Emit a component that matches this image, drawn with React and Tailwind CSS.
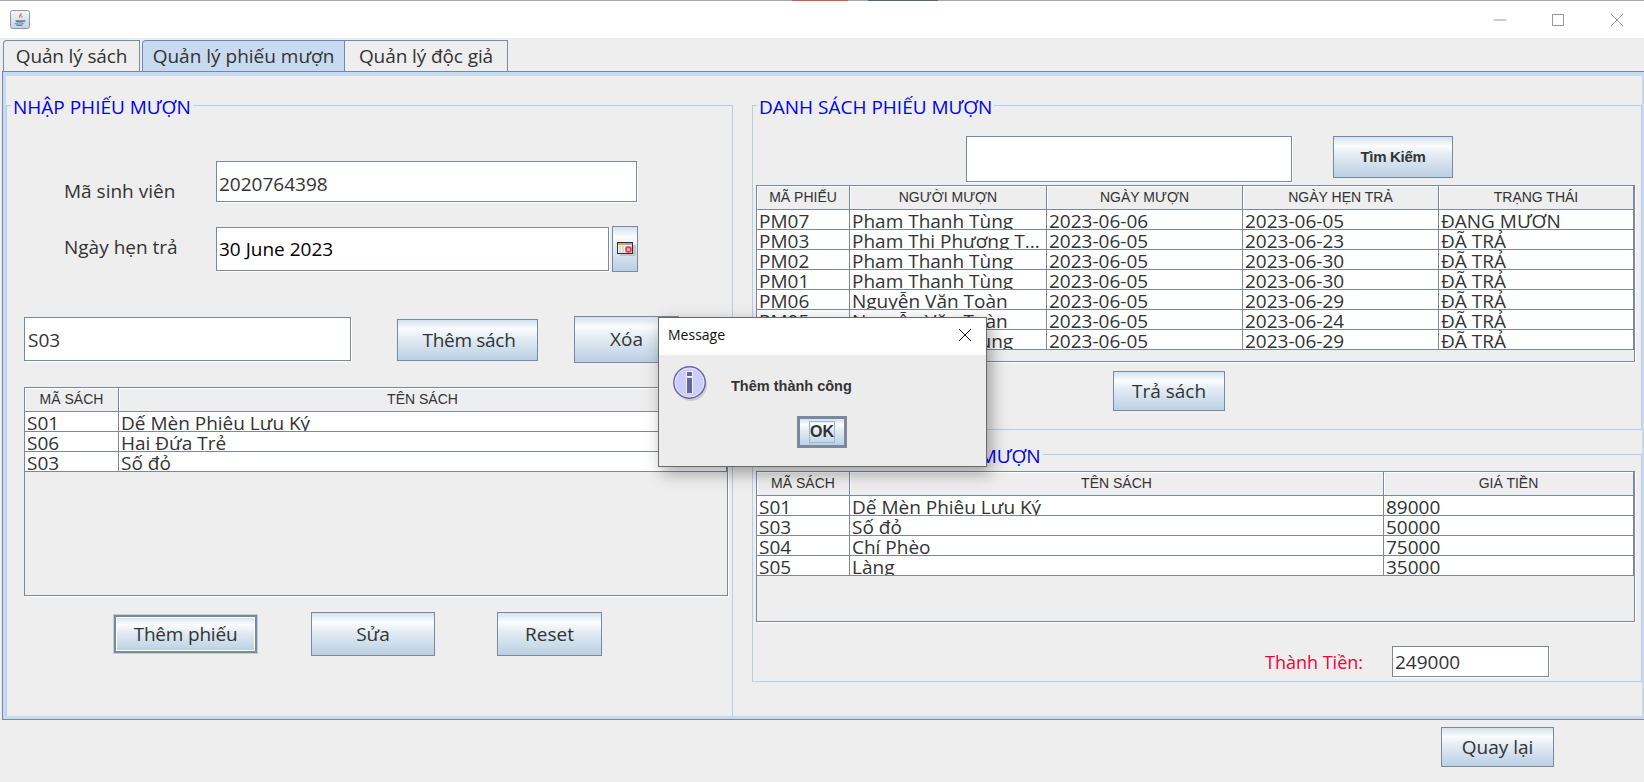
import React from "react";

const BTN = "flex items-center justify-center border border-[#7a8a9c] bg-[linear-gradient(180deg,#d5e1ec_0%,#fbfdfe_22%,#e3ecf4_45%,#bbd0e4_100%)] text-[#333] shrink-0";
const FIELD = "flex items-center border border-[#7a8a9c] bg-white shadow-[1px_1px_0_#fff] pl-[2px] shrink-0 text-[#333]";

function JavaIcon() {
  return (
    <svg width="20" height="19" viewBox="0 0 20 19">
      <defs>
        <linearGradient id="jg" x1="0" y1="0" x2="0" y2="1">
          <stop offset="0" stopColor="#f4f7fa" />
          <stop offset="1" stopColor="#c3d3e3" />
        </linearGradient>
      </defs>
      <rect x="0.5" y="0.5" width="19" height="18" rx="2" fill="url(#jg)" stroke="#8a9aaa" />
      <path d="M10.5 2.5c1 1.5-2 2.5-1.5 4.5.2.8 1 1.4 1 1.4-.4-1 .2-1.7 1-2.5 1-1 .8-2.3-.5-3.4z" fill="#e8782a" />
      <path d="M12.5 5.5c-1 .8-1.4 1.5-1 2.8.6-.8 1.6-1.5 1-2.8z" fill="#e8782a" />
      <path d="M5.5 10.2h8.5v1.1c0 .8-1 1.2-4.2 1.2s-4.3-.4-4.3-1.2z" fill="#5b7f9e" />
      <path d="M14 10.3c1.4-.2 1.8 1.2.2 1.7" fill="none" stroke="#5b7f9e" />
      <path d="M5 13.6c1.6.6 7 .6 8.6 0M6 15.2c1.4.4 5 .4 6.4 0" fill="none" stroke="#5b7f9e" />
    </svg>
  );
}

function CalendarIcon() {
  return (
    <svg width="19" height="14" viewBox="0 0 19 14">
      <rect x="3" y="3" width="16" height="11" fill="#c4c4c4" />
      <rect x="0.5" y="0.5" width="15" height="11" fill="#f4f4f4" stroke="#333" />
      <rect x="1" y="1" width="7" height="2" fill="#e8a53c" />
      <rect x="8" y="1" width="7" height="2" fill="#8fa9cf" />
      <rect x="2" y="4" width="2" height="7" fill="#d8d8d8" />
      <rect x="5" y="4" width="2" height="7" fill="#d8d8d8" />
      <rect x="8" y="4" width="7" height="7" fill="#f5b5b5" />
      <circle cx="11.5" cy="7.5" r="2.4" fill="none" stroke="#e04050" strokeWidth="1.6" />
    </svg>
  );
}

function InfoIcon() {
  return (
    <svg width="36" height="38" viewBox="0 0 36 38">
      <ellipse cx="18" cy="19" rx="16" ry="16" fill="#999" opacity="0.35" />
      <circle cx="16.5" cy="16.5" r="15.7" fill="#ccccff" stroke="#666699" strokeWidth="1.4" />
      <circle cx="16.5" cy="16.5" r="14.4" fill="none" stroke="#e4e4ff" strokeWidth="1" />
      <rect x="13" y="5" width="7" height="6" fill="#fff" opacity="0.7" />
      <rect x="13" y="11.5" width="7" height="16" fill="#fff" opacity="0.7" />
      <rect x="14" y="6" width="5" height="4" fill="#666699" />
      <rect x="14" y="12" width="5" height="15" fill="#666699" />
    </svg>
  );
}

function Cell({ w, children }) {
  return (
    <div className="h-[19px] shrink-0 overflow-hidden whitespace-nowrap border-r border-[#7a8a9c] pl-[2px]" style={{ width: w }}>
      <span className="-mt-[2px] block text-[19px] leading-[26px] text-[#333]">{children}</span>
    </div>
  );
}

function DataTable({ widths, heads, rows, h }) {
  return (
    <div className="overflow-hidden border border-[#7a8a9c] shadow-[1px_1px_0_#fff]" style={{ height: h }}>
      <div className="flex h-[24px] border-b border-[#7a8a9c] bg-[#eee]">
        {heads.map((t, i) => (
          <div
            key={t}
            className="flex shrink-0 items-center justify-center border-r border-[#7a8a9c] font-['Liberation_Sans',sans-serif] text-[14px] text-[#333] shadow-[inset_1px_1px_0_#fff]"
            style={{ width: widths[i] }}
          >
            {t}
          </div>
        ))}
      </div>
      {rows.map((r, ri) => (
        <div key={ri} className="flex h-[20px] border-b border-[#7a8a9c] bg-white">
          {r.map((c, i) => (
            <Cell key={i} w={widths[i]}>{c}</Cell>
          ))}
        </div>
      ))}
    </div>
  );
}

function Legend({ children }) {
  return (
    <legend className="ml-[4px] whitespace-nowrap px-[2px] text-[19px] leading-[26px] text-[#0000f0]">
      <span className="relative top-[2px]">{children}</span>
    </legend>
  );
}

const PM = [
  ["PM07", "Phạm Thanh Tùng", "2023-06-06", "2023-06-05", "ĐANG MƯỢN"],
  ["PM03", "Phạm Thị Phương T...", "2023-06-05", "2023-06-23", "ĐÃ TRẢ"],
  ["PM02", "Phạm Thanh Tùng", "2023-06-05", "2023-06-30", "ĐÃ TRẢ"],
  ["PM01", "Phạm Thanh Tùng", "2023-06-05", "2023-06-30", "ĐÃ TRẢ"],
  ["PM06", "Nguyễn Văn Toàn", "2023-06-05", "2023-06-29", "ĐÃ TRẢ"],
  ["PM05", "Nguyễn Văn Toàn", "2023-06-05", "2023-06-24", "ĐÃ TRẢ"],
  ["PM04", "Phạm Thanh Tùng", "2023-06-05", "2023-06-29", "ĐÃ TRẢ"],
];

export default function App() {
  return (
    <div className="relative flex h-[782px] w-[1644px] flex-col overflow-hidden bg-[#eee] font-['Open_Sans',sans-serif]">
      {/* strip of the window behind */}
      <div className="flex h-[1px] shrink-0 bg-[#a5a9ad]">
        <div className="w-[792px]" />
        <div className="w-[56px] bg-[#b9654f]" />
        <div className="w-[20px]" />
        <div className="w-[70px] bg-[#5a6470]" />
      </div>
      {/* title bar */}
      <div className="flex h-[37px] shrink-0 items-center bg-white pl-[10px]">
        <JavaIcon />
        <div className="ml-auto flex items-center">
          <svg width="12" height="12" viewBox="0 0 12 12" className="mr-[46px]"><path d="M0 6h12" stroke="#999" /></svg>
          <svg width="12" height="12" viewBox="0 0 12 12" className="mr-[47px]"><rect x="0.5" y="0.5" width="11" height="11" fill="none" stroke="#999" /></svg>
          <svg width="12" height="12" viewBox="0 0 12 12" className="mr-[21px]"><path d="M0 0l12 12M12 0L0 12" stroke="#999" /></svg>
        </div>
      </div>
      {/* tabs */}
      <div className="flex h-[33px] shrink-0 items-end pl-[3px] text-[19px] text-[#333]">
        <div className="flex h-[31px] w-[137px] items-center justify-center rounded-tl-[4px] border border-b-0 border-[#7a8a9c] bg-[#eee] pt-[1px] tracking-[-0.15px]">Quản lý sách</div>
        <div className="ml-[2px] flex h-[31px] w-[203px] items-center justify-center rounded-tl-[4px] border border-b-0 border-[#6f87b5] bg-[#c8daef] pt-[1px]">Quản lý phiếu mượn</div>
        <div className="flex h-[31px] w-[163px] items-center justify-center rounded-tr-[1px] border border-b-0 border-l-0 border-[#7a8a9c] bg-[#eee] pt-[1px] tracking-[-0.1px]">Quản lý độc giả</div>
      </div>
      {/* tab pane */}
      <div className="ml-[2px] h-[649px] shrink-0 border-t border-b border-l border-t-[#6f87b5] border-b-[#7a8a9c] border-l-[#6f87b5]">
        <div className="flex h-[647px] border-t-[4px] border-r-[2px] border-b-[3px] border-l-[3px] border-[#c8daef]">
          {/* left column */}
          <fieldset className="mt-[16px] h-[624px] w-[727px] shrink-0 border border-b-0 border-[#b7cde3]">
            <Legend>NHẬP PHIẾU MƯỢN</Legend>
            <div className="mt-[43px] flex items-start">
              <div className="ml-[57px] mt-[17px] w-[152px] shrink-0 text-[19px] leading-[26px] text-[#333]">Mã sinh viên</div>
              <div className={FIELD + " h-[41px] w-[421px] pt-[6px] text-[19px]"}>2020764398</div>
            </div>
            <div className="mt-[22px] flex items-start">
              <div className="ml-[57px] mt-[8px] w-[152px] shrink-0 text-[19px] leading-[26px] text-[#333]">Ngày hẹn trả</div>
              <div className={FIELD + " mt-[1px] h-[44px] w-[393px] text-[19px] !text-black"}>30 June 2023</div>
              <div className={BTN + " ml-[3px] h-[46px] w-[26px] pl-[2px]"}><CalendarIcon /></div>
            </div>
            <div className="mt-[44px] flex items-start text-[19px]">
              <div className={FIELD + " ml-[17px] mt-[1px] h-[44px] w-[327px] pl-[3px] pt-[2px]"}>S03</div>
              <div className={BTN + " ml-[46px] mt-[3px] h-[42px] w-[141px] tracking-[-0.3px] pl-[3px]"}>Thêm sách</div>
              <div className={BTN + " ml-[36px] h-[47px] w-[105px]"}>Xóa</div>
            </div>
            <div className="ml-[17px] mt-[24px] w-[704px]">
              <DataTable
                h={209}
                widths={[94, 608]}
                heads={["MÃ SÁCH", "TÊN SÁCH"]}
                rows={[
                  ["S01", "Dế Mèn Phiêu Lưu Ký"],
                  ["S06", "Hai Đứa Trẻ"],
                  ["S03", "Số đỏ"],
                ]}
              />
            </div>
            <div className="mt-[16px] flex items-start text-[19px]">
              <div className="ml-[106px] mt-[2px] h-[40px] w-[145px] shrink-0 border border-[#b9cfe6] bg-[#b9cfe6]">
                <div className={BTN + " h-full w-full border-[2px] tracking-[-0.2px] shadow-[inset_0_0_0_1px_#fff]"}>Thêm phiếu</div>
              </div>
              <div className={BTN + " ml-[53px] h-[44px] w-[124px]"}>Sửa</div>
              <div className={BTN + " ml-[62px] h-[44px] w-[105px]"}>Reset</div>
            </div>
          </fieldset>

          {/* right column */}
          <div className="ml-[19px] flex w-[890px] shrink-0 flex-col">
            <fieldset className="mt-[16px] h-[338px] shrink-0 border border-[#b7cde3]">
              <Legend>DANH SÁCH PHIẾU MƯỢN</Legend>
              <div className="mt-[18px] flex items-start">
                <div className={FIELD + " ml-[213px] h-[46px] w-[326px]"} />
                <div className={BTN + " ml-[41px] h-[42px] w-[120px] font-['Liberation_Sans',sans-serif] text-[15px] font-bold tracking-[-0.3px]"}>Tìm Kiếm</div>
              </div>
              <div className="ml-[3px] mt-[3px] w-[879px]">
                <DataTable
                  h={177}
                  widths={[93, 197, 196, 196, 195]}
                  heads={["MÃ PHIẾU", "NGƯỜI MƯỢN", "NGÀY MƯỢN", "NGÀY HẸN TRẢ", "TRẠNG THÁI"]}
                  rows={PM}
                />
              </div>
              <div className={BTN + " ml-[360px] mt-[9px] h-[40px] w-[112px] text-[19px]"}>Trả sách</div>
            </fieldset>
            <fieldset className="mt-[11px] h-[241px] shrink-0 border border-[#b7cde3]">
              <Legend>THÔNG TIN SÁCH PHIẾU MƯỢN</Legend>
              <div className="ml-[3px] mt-[4px] w-[879px]">
                <DataTable
                  h={151}
                  widths={[93, 534, 250]}
                  heads={["MÃ SÁCH", "TÊN SÁCH", "GIÁ TIỀN"]}
                  rows={[
                    ["S01", "Dế Mèn Phiêu Lưu Ký", "89000"],
                    ["S03", "Số đỏ", "50000"],
                    ["S04", "Chí Phèo", "75000"],
                    ["S05", "Làng", "35000"],
                  ]}
                />
              </div>
              <div className="mt-[24px] flex items-start text-[19px]">
                <div className="ml-[512px] mt-[3px] w-[127px] shrink-0 text-[18px] leading-[26px] text-[#f0003c]">Thành Tiền:</div>
                <div className={FIELD + " h-[31px] w-[157px] pt-[1px]"}>249000</div>
              </div>
            </fieldset>
          </div>
        </div>
      </div>
      {/* footer */}
      <div className="flex flex-1 items-start pt-[7px]">
        <div className={BTN + " ml-[1441px] h-[40px] w-[113px] text-[19px]"}>Quay lại</div>
      </div>

      {/* message dialog */}
      <div className="absolute left-[658px] top-[317px] flex h-[150px] w-[329px] flex-col border border-[#6a6a6a] bg-[#ececec] shadow-[4px_6px_16px_rgba(0,0,0,0.35)]">
        <div className="flex h-[37px] shrink-0 items-center justify-between bg-white pb-[4px] pl-[9px] pr-[15px] text-[14px] text-[#111]">
          <span>Message</span>
          <svg width="12" height="12" viewBox="0 0 12 12"><path d="M0 0l12 12M12 0L0 12" stroke="#111" /></svg>
        </div>
        <div className="flex items-start">
          <div className="ml-[14px] mt-[11px] shrink-0"><InfoIcon /></div>
          <div className="ml-[22px] mt-[21px] font-['Liberation_Sans',sans-serif] text-[14.5px] font-bold leading-[20px] text-[#333]">Thêm thành công</div>
        </div>
        <div className="ml-[138px] mt-[12px] flex h-[32px] w-[50px] items-center justify-center border-[3px] border-[#7a8a9c] bg-[linear-gradient(180deg,#d5e1ec_0%,#fbfdfe_22%,#e3ecf4_45%,#bbd0e4_100%)]">
          <div className="flex h-[22px] w-[26px] items-center justify-center border border-[#9db6cf] font-['Liberation_Sans',sans-serif] text-[16px] font-bold text-[#333]">OK</div>
        </div>
      </div>
    </div>
  );
}
